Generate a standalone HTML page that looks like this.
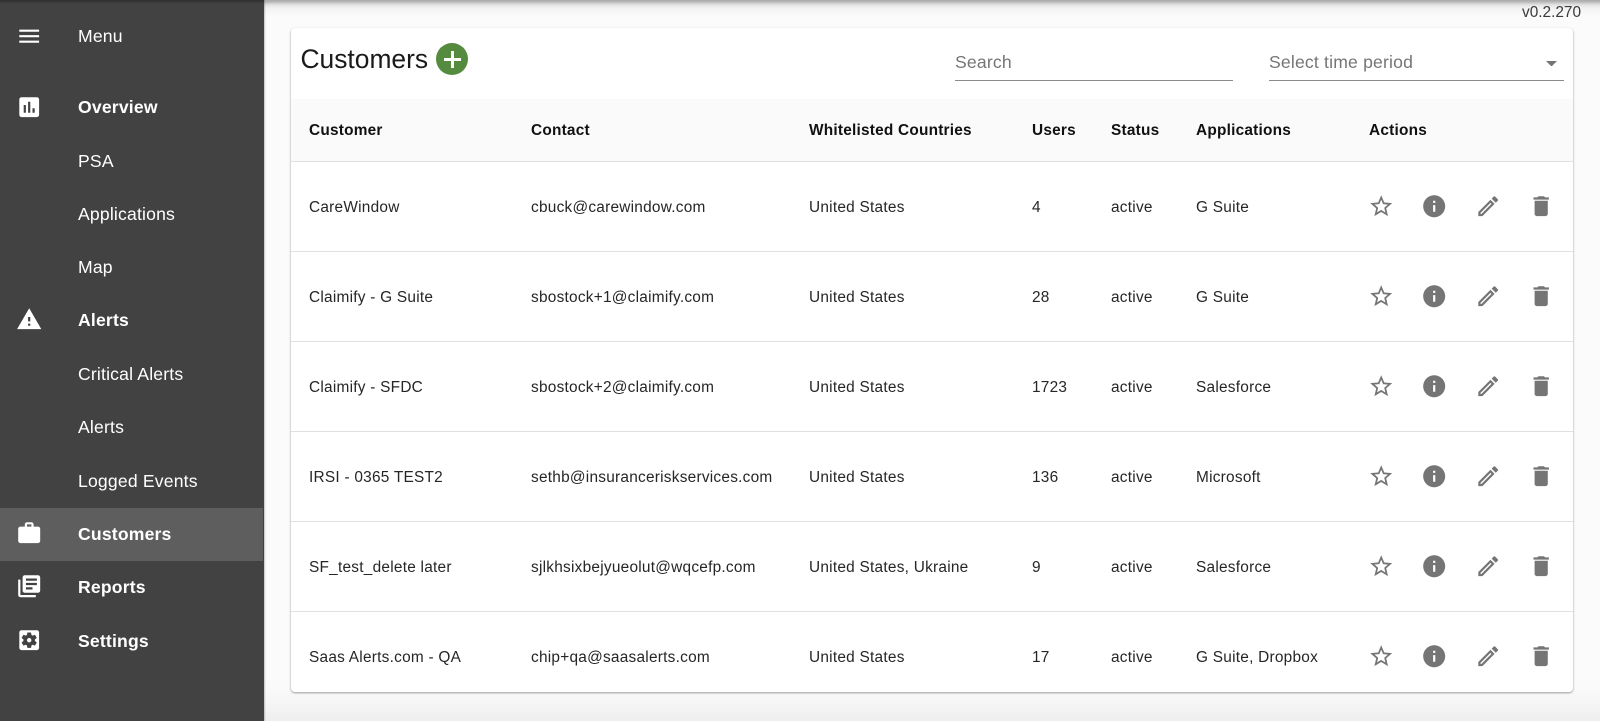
<!DOCTYPE html>
<html lang="en">
<head>
<meta charset="utf-8">
<title>Customers</title>
<style>
html,body{margin:0;padding:0;width:1600px;height:721px;overflow:hidden;background:#fafafa;font-family:"Liberation Sans",Arial,sans-serif;}
#page{position:relative;width:1600px;height:721px;overflow:hidden;background:#fbfbfb;}
.topshadow{position:absolute;left:264px;top:0;width:1336px;height:16px;background:linear-gradient(to bottom,#a8a8a8 0,#bababa 2px,#cacaca 3px,#e4e4e4 5px,#f2f2f2 8px,#fbfbfb 16px);}
.botshade{position:absolute;left:264px;top:680px;width:1336px;height:41px;background:linear-gradient(to bottom,#fbfbfb,#f8f8f8 40%,#eeeeee);}
#side{position:absolute;left:0;top:0;width:264px;height:721px;background:#424242;box-shadow:1px 0 1px rgba(0,0,0,.22);}
#side .cap{position:absolute;left:0;top:0;width:264px;height:4px;background:linear-gradient(to bottom,#2e2e2e,#424242);}
#side .sel{position:absolute;left:0;top:508px;width:263px;height:53px;background:#5e5e5e;}
.ni{position:absolute;left:78px;color:#fff;font-size:17.6px;letter-spacing:.18px;line-height:24px;white-space:nowrap;}
.ni.b{font-weight:700;}
svg{position:absolute;display:block;}
.si{fill:#fff;width:26.4px;height:26.4px;left:16px;}
#card{position:absolute;left:291px;top:28px;width:1282px;height:664px;background:#fff;border-radius:4px;box-shadow:0 1px 2px rgba(0,0,0,.38),0 0 1px rgba(0,0,0,.04);}
.head{position:absolute;left:291px;top:99px;width:1282px;height:62px;background:#fafafa;}
.ln{position:absolute;left:291px;width:1282px;height:1px;background:#e0e0e0;}
.t{position:absolute;font-size:15.4px;letter-spacing:.25px;line-height:20px;color:#262626;white-space:nowrap;}
.h{font-weight:700;color:#111;top:121px;letter-spacing:.22px;}
.title{position:absolute;left:300.5px;top:42px;font-size:26.4px;line-height:34px;color:#1a1a1a;white-space:nowrap;}
.add{position:absolute;left:436px;top:43px;width:32px;height:32px;border-radius:50%;background:#558b3f;}
.add i{position:absolute;background:#fff;display:block;}
.ph{position:absolute;font-size:17.6px;letter-spacing:.18px;line-height:24px;color:#757575;white-space:nowrap;top:50px;}
.ul{position:absolute;top:80px;height:1px;background:#8a8a8a;}
.ver{position:absolute;left:1522px;top:3px;font-size:15.4px;line-height:20px;color:#3a3a3a;white-space:nowrap;}
.ai{fill:#757575;width:26.4px;height:26.4px;}
.a1{left:1368px}.a2{left:1421px}.a3{left:1475px}.a4{left:1528px}
.c1{left:309px}.c2{left:531px}.c3{left:809px}.c4{left:1032px}.c5{left:1111px}.c6{left:1196px}
</style>
</head>
<body>
<svg width="0" height="0" style="position:absolute;width:0;height:0">
<symbol id="star" viewBox="0 0 24 24"><path d="M22 9.24l-7.19-.62L12 2 9.19 8.63 2 9.24l5.46 4.73L5.82 21 12 17.27 18.18 21l-1.63-7.03L22 9.24zM12 15.4l-3.76 2.27 1-4.28-3.32-2.88 4.38-.38L12 6.1l1.71 4.04 4.38.38-3.32 2.88 1 4.28L12 15.4z"/></symbol>
<symbol id="info" viewBox="0 0 24 24"><path d="M12 2C6.48 2 2 6.48 2 12s4.48 10 10 10 10-4.48 10-10S17.52 2 12 2zm1 15h-2v-6h2v6zm0-8h-2V7h2v2z"/></symbol>
<symbol id="edit" viewBox="0 0 24 24"><path d="M14.06 9.02l.92.92L5.92 19H5v-.92l9.06-9.06M17.66 3c-.25 0-.51.1-.7.29l-1.83 1.83 3.75 3.75 1.83-1.83c.39-.39.39-1.02 0-1.41l-2.34-2.34c-.2-.2-.45-.29-.71-.29zm-3.6 3.19L3 17.25V21h3.75L17.81 9.94l-3.75-3.75z"/></symbol>
<symbol id="del" viewBox="0 0 24 24"><path d="M6 19c0 1.1.9 2 2 2h8c1.1 0 2-.9 2-2V7H6v12zM19 4h-3.5l-1-1h-5l-1 1H5v2h14V4z"/></symbol>
</svg>
<div id="page">
<div class="topshadow"></div>
<div class="botshade"></div>

<div id="side">
<div class="cap"></div>
<div class="sel"></div>
<svg class="si" style="top:23px" viewBox="0 0 24 24"><path d="M3 18h18v-2H3v2zm0-5h18v-2H3v2zm0-7v2h18V6H3z"/></svg>
<div class="ni" style="top:24px">Menu</div>
<svg class="si" style="top:94px" viewBox="0 0 24 24"><path d="M19 3H5c-1.1 0-2 .9-2 2v14c0 1.1.9 2 2 2h14c1.1 0 2-.9 2-2V5c0-1.1-.9-2-2-2zM9 17H7v-7h2v7zm4 0h-2V7h2v10zm4 0h-2v-4h2v4z"/></svg>
<div class="ni b" style="top:95px">Overview</div>
<div class="ni" style="top:149px">PSA</div>
<div class="ni" style="top:202px">Applications</div>
<div class="ni" style="top:255px">Map</div>
<svg class="si" style="top:306px;left:16px" viewBox="0 0 24 24"><path d="M1 21h22L12 2 1 21zm12-3h-2v-2h2v2zm0-4h-2v-4h2v4z"/></svg>
<div class="ni b" style="top:308px">Alerts</div>
<div class="ni" style="top:362px">Critical Alerts</div>
<div class="ni" style="top:415px">Alerts</div>
<div class="ni" style="top:469px">Logged Events</div>
<svg class="si" style="top:520px;left:15.5px" viewBox="0 0 24 24"><path d="M20 6h-4V4c0-1.11-.89-2-2-2h-4c-1.11 0-2 .89-2 2v2H4c-1.11 0-1.99.89-1.99 2L2 19c0 1.11.89 2 2 2h16c1.11 0 2-.89 2-2V8c0-1.11-.89-2-2-2zm-6 0h-4V4h4v2z"/></svg>
<div class="ni b" style="top:522px">Customers</div>
<svg class="si" style="top:573px;left:15.5px" viewBox="0 0 24 24"><path d="M4 6H2v14c0 1.1.9 2 2 2h14v-2H4V6zm16-4H8c-1.1 0-2 .9-2 2v12c0 1.1.9 2 2 2h12c1.1 0 2-.9 2-2V4c0-1.1-.9-2-2-2zm-1 9H9V9h10v2zm-4 4H9v-2h6v2zm4-8H9V5h10v2z"/></svg>
<div class="ni b" style="top:575px">Reports</div>
<svg class="si" style="top:627px" viewBox="0 0 24 24"><path d="M12 10c-1.1 0-2 .9-2 2s.9 2 2 2 2-.9 2-2-.9-2-2-2zm7-7H5c-1.11 0-2 .9-2 2v14c0 1.1.89 2 2 2h14c1.11 0 2-.9 2-2V5c0-1.1-.89-2-2-2zm-1.75 9c0 .23-.02.46-.05.68l1.48 1.16c.13.11.17.3.08.45l-1.4 2.42c-.09.15-.27.21-.43.15l-1.74-.7c-.36.28-.76.51-1.18.69l-.26 1.85c-.03.17-.18.3-.35.3h-2.8c-.17 0-.32-.13-.35-.29l-.26-1.85c-.43-.18-.82-.41-1.18-.69l-1.74.7c-.16.06-.34 0-.43-.15l-1.4-2.42c-.09-.15-.05-.34.08-.45l1.48-1.16c-.03-.23-.05-.46-.05-.69 0-.23.02-.46.05-.68l-1.48-1.16c-.13-.11-.17-.3-.08-.45l1.4-2.42c.09-.15.27-.21.43-.15l1.74.7c.36-.28.76-.51 1.18-.69l.26-1.85c.03-.17.18-.3.35-.3h2.8c.17 0 .32.13.35.29l.26 1.85c.43.18.82.41 1.18.69l1.74-.7c.16-.06.34 0 .43.15l1.4 2.42c.09.15.05.34-.08.45l-1.48 1.16c.03.23.05.46.05.69z"/></svg>
<div class="ni b" style="top:629px">Settings</div>
</div>

<div class="ver">v0.2.270</div>
<div id="card"></div>
<div class="title">Customers</div>
<div class="add"><i style="left:7.5px;top:14.5px;width:17px;height:3px"></i><i style="left:14.5px;top:7.5px;width:3px;height:17px"></i></div>
<div class="ph" style="left:955px">Search</div>
<div class="ul" style="left:955px;width:278px"></div>
<div class="ph" style="left:1269px">Select time period</div>
<div class="ul" style="left:1269px;width:295px"></div>
<svg style="left:1545.5px;top:60.5px;width:11px;height:5.5px;fill:#757575" viewBox="0 0 14 7"><path d="M0 0h14L7 7z"/></svg>

<div class="head"></div>
<div class="ln" style="top:161px"></div>
<div class="ln" style="top:251px"></div>
<div class="ln" style="top:341px"></div>
<div class="ln" style="top:431px"></div>
<div class="ln" style="top:521px"></div>
<div class="ln" style="top:611px"></div>

<div class="t h c1">Customer</div>
<div class="t h c2">Contact</div>
<div class="t h c3">Whitelisted Countries</div>
<div class="t h c4">Users</div>
<div class="t h c5">Status</div>
<div class="t h c6">Applications</div>
<div class="t h" style="left:1369px">Actions</div>

<!-- row 1 -->
<div class="t c1" style="top:198px">CareWindow</div>
<div class="t c2" style="top:198px">cbuck@carewindow.com</div>
<div class="t c3" style="top:198px">United States</div>
<div class="t c4" style="top:198px">4</div>
<div class="t c5" style="top:198px">active</div>
<div class="t c6" style="top:198px">G Suite</div>
<svg class="ai a1" style="top:193px"><use href="#star"/></svg>
<svg class="ai a2" style="top:193px"><use href="#info"/></svg>
<svg class="ai a3" style="top:193px"><use href="#edit"/></svg>
<svg class="ai a4" style="top:193px"><use href="#del"/></svg>

<!-- row 2 -->
<div class="t c1" style="top:288px">Claimify - G Suite</div>
<div class="t c2" style="top:288px">sbostock+1@claimify.com</div>
<div class="t c3" style="top:288px">United States</div>
<div class="t c4" style="top:288px">28</div>
<div class="t c5" style="top:288px">active</div>
<div class="t c6" style="top:288px">G Suite</div>
<svg class="ai a1" style="top:283px"><use href="#star"/></svg>
<svg class="ai a2" style="top:283px"><use href="#info"/></svg>
<svg class="ai a3" style="top:283px"><use href="#edit"/></svg>
<svg class="ai a4" style="top:283px"><use href="#del"/></svg>

<!-- row 3 -->
<div class="t c1" style="top:378px">Claimify - SFDC</div>
<div class="t c2" style="top:378px">sbostock+2@claimify.com</div>
<div class="t c3" style="top:378px">United States</div>
<div class="t c4" style="top:378px">1723</div>
<div class="t c5" style="top:378px">active</div>
<div class="t c6" style="top:378px">Salesforce</div>
<svg class="ai a1" style="top:373px"><use href="#star"/></svg>
<svg class="ai a2" style="top:373px"><use href="#info"/></svg>
<svg class="ai a3" style="top:373px"><use href="#edit"/></svg>
<svg class="ai a4" style="top:373px"><use href="#del"/></svg>

<!-- row 4 -->
<div class="t c1" style="top:468px">IRSI - 0365 TEST2</div>
<div class="t c2" style="top:468px">sethb@insuranceriskservices.com</div>
<div class="t c3" style="top:468px">United States</div>
<div class="t c4" style="top:468px">136</div>
<div class="t c5" style="top:468px">active</div>
<div class="t c6" style="top:468px">Microsoft</div>
<svg class="ai a1" style="top:463px"><use href="#star"/></svg>
<svg class="ai a2" style="top:463px"><use href="#info"/></svg>
<svg class="ai a3" style="top:463px"><use href="#edit"/></svg>
<svg class="ai a4" style="top:463px"><use href="#del"/></svg>

<!-- row 5 -->
<div class="t c1" style="top:558px">SF_test_delete later</div>
<div class="t c2" style="top:558px">sjlkhsixbejyueolut@wqcefp.com</div>
<div class="t c3" style="top:558px">United States, Ukraine</div>
<div class="t c4" style="top:558px">9</div>
<div class="t c5" style="top:558px">active</div>
<div class="t c6" style="top:558px">Salesforce</div>
<svg class="ai a1" style="top:553px"><use href="#star"/></svg>
<svg class="ai a2" style="top:553px"><use href="#info"/></svg>
<svg class="ai a3" style="top:553px"><use href="#edit"/></svg>
<svg class="ai a4" style="top:553px"><use href="#del"/></svg>

<!-- row 6 -->
<div class="t c1" style="top:648px">Saas Alerts.com - QA</div>
<div class="t c2" style="top:648px">chip+qa@saasalerts.com</div>
<div class="t c3" style="top:648px">United States</div>
<div class="t c4" style="top:648px">17</div>
<div class="t c5" style="top:648px">active</div>
<div class="t c6" style="top:648px">G Suite, Dropbox</div>
<svg class="ai a1" style="top:643px"><use href="#star"/></svg>
<svg class="ai a2" style="top:643px"><use href="#info"/></svg>
<svg class="ai a3" style="top:643px"><use href="#edit"/></svg>
<svg class="ai a4" style="top:643px"><use href="#del"/></svg>
</div>
</body>
</html>
